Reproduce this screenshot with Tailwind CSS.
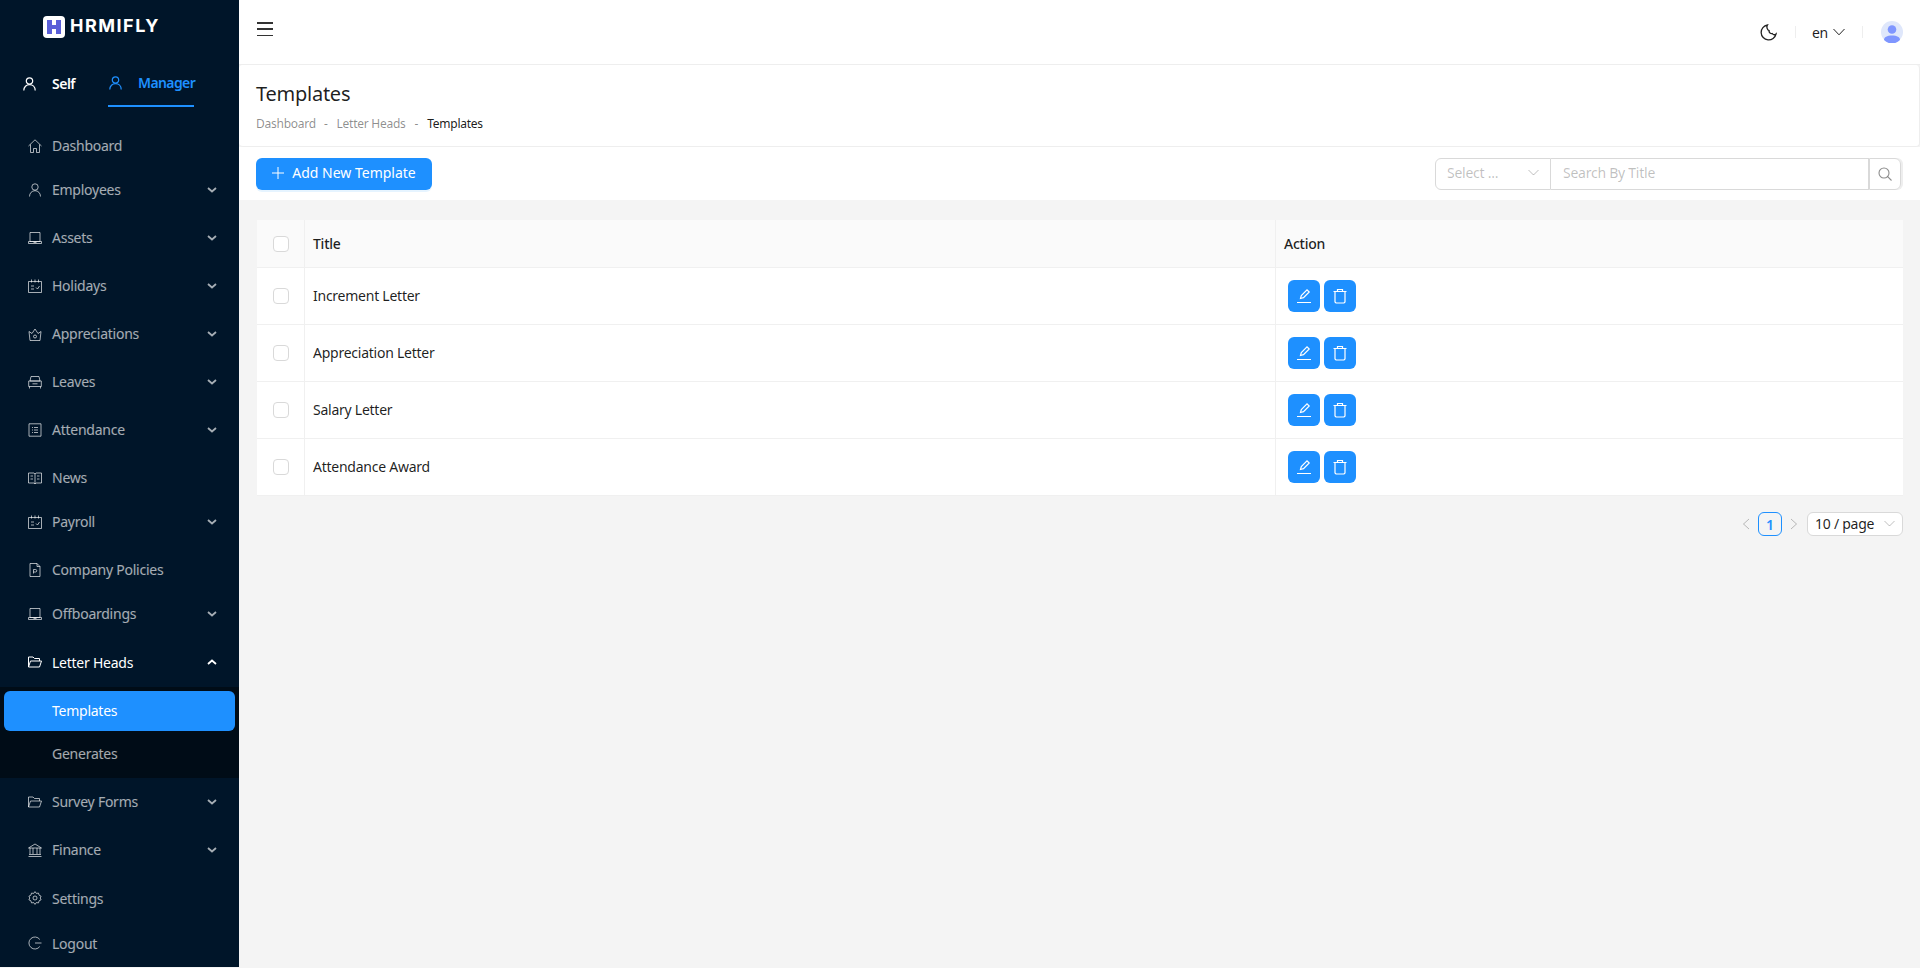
<!DOCTYPE html>
<html>
<head>
<meta charset="utf-8">
<script src="https://cdn.jsdelivr.net/npm/@tailwindcss/browser@4"></script>
<title>Templates</title>
</head>
<body class="font-['Noto_Sans',sans-serif] text-[14px] tracking-[-0.25px] text-[#000000e0] bg-[#f4f4f4] overflow-hidden">
<div class="flex h-[968px] w-[1920px]">
  <aside class="w-[239px] h-[967px] shrink-0 bg-[#001529] text-white/65">
    <div class="h-[52px] pt-[16px] pl-[43px] flex items-start gap-[5px]">
      <svg class="shrink-0" width="22" height="22" viewBox="0 0 22 22"><rect width="22" height="22" rx="4" fill="#fff"/><path d="M4 4h5v5h4V4h5v14h-5v-5H9v5H4z" fill="#5a5fd8"/></svg>
      <span class="text-[18px] leading-[20px] font-bold tracking-[1.5px] text-white font-['Inter',sans-serif]">HRMIFLY</span>
    </div>
    <div class="h-[55px] flex pl-[23px] text-[14px] font-semibold">
      <div class="flex items-center h-[55px] pt-[8px] w-[85px] text-white">
        <svg class="shrink-0" width="13" height="14" viewBox="0 0 13 14" fill="none" stroke="currentColor" stroke-width="1.2"><circle cx="6.5" cy="4" r="3.2"/><path d="M.8 13.4c0-3.4 2.5-5.8 5.7-5.8s5.7 2.4 5.7 5.8"/></svg>
        <span class="ml-[16px] tracking-[-0.5px]">Self</span>
      </div>
      <div class="flex items-center h-[55px] pt-[8px] w-[86px] border-b-2 border-[#1e90ff] text-[#1e90ff]">
        <svg class="ml-[1px] shrink-0" width="13" height="14" viewBox="0 0 13 14" fill="none" stroke="currentColor" stroke-width="1.2"><circle cx="6.5" cy="4" r="3.2"/><path d="M.8 13.4c0-3.4 2.5-5.8 5.7-5.8s5.7 2.4 5.7 5.8"/></svg>
        <span class="ml-[16px] tracking-[-0.6px]">Manager</span>
      </div>
    </div>
    <nav class="pt-[19px]">
      <a class="flex items-center h-[40px] pb-[1px] mb-1 pl-[28px]"><svg class="mr-[10px]" width="14" height="14" viewBox="0 0 14 14" fill="none" stroke="currentColor"><path d="M.5 7 7 .8 13.500 7M2.500 5.500v8h3V9.500h3v4h3v-8"/></svg>Dashboard</a>
      <a class="flex items-center h-[40px] pb-[1px] mb-2 pl-[28px] pr-[22px]"><svg class="mr-[10px]" width="14" height="14" viewBox="0 0 14 14" fill="none" stroke="currentColor"><circle cx="7" cy="4" r="3.2"/><path d="M1.500 13.500c0-3.400 2.400-5.800 5.500-5.800s5.500 2.400 5.500 5.800"/></svg><span class="flex-1">Employees</span><svg width="10" height="6" viewBox="0 0 10 6" fill="none" stroke="currentColor" stroke-width="1.8"><path d="m1 1 4 3.500L9 1"/></svg></a>
      <a class="flex items-center h-[40px] pb-[1px] mb-2 pl-[28px] pr-[22px]"><svg class="mr-[10px]" width="14" height="14" viewBox="0 0 14 14" fill="none" stroke="currentColor"><path d="M2 1.500h10v9H2zM.5 10.500h13v2H.5zM5.500 11.500h3"/></svg><span class="flex-1">Assets</span><svg width="10" height="6" viewBox="0 0 10 6" fill="none" stroke="currentColor" stroke-width="1.8"><path d="m1 1 4 3.500L9 1"/></svg></a>
      <a class="flex items-center h-[40px] pb-[1px] mb-2 pl-[28px] pr-[22px]"><svg class="mr-[10px]" width="14" height="14" viewBox="0 0 14 14" fill="none" stroke="currentColor"><path d="M.5 2.500h13v11H.5zM3.500.5v3M7 .5v3M10.500.5v3M3 7h3M3 10h3M8 8.500l1.500 1.500 2-3"/></svg><span class="flex-1">Holidays</span><svg width="10" height="6" viewBox="0 0 10 6" fill="none" stroke="currentColor" stroke-width="1.8"><path d="m1 1 4 3.500L9 1"/></svg></a>
      <a class="flex items-center h-[40px] pb-[1px] mb-2 pl-[28px] pr-[22px]"><svg class="mr-[10px]" width="14" height="14" viewBox="0 0 14 14" fill="none" stroke="currentColor"><path d="M1 4.500 4 6.500 7 2l3 4.500 3-2-1 9H2zM1 1.500l.01 0M13 1.500l.01 0"/><circle cx="7" cy="9.500" r="1.500"/></svg><span class="flex-1">Appreciations</span><svg width="10" height="6" viewBox="0 0 10 6" fill="none" stroke="currentColor" stroke-width="1.8"><path d="m1 1 4 3.500L9 1"/></svg></a>
      <a class="flex items-center h-[40px] pb-[1px] mb-2 pl-[28px] pr-[22px]"><svg class="mr-[10px]" width="14" height="14" viewBox="0 0 14 14" fill="none" stroke="currentColor"><path d="M3 1.500h8l1 4.500H2zM.7 6h12.600v5.500H.7zM1.500 11.500v2M12.500 11.500v2M4.500 8.800h5"/></svg><span class="flex-1">Leaves</span><svg width="10" height="6" viewBox="0 0 10 6" fill="none" stroke="currentColor" stroke-width="1.8"><path d="m1 1 4 3.500L9 1"/></svg></a>
      <a class="flex items-center h-[40px] pb-[1px] mb-2 pl-[28px] pr-[22px]"><svg class="mr-[10px]" width="14" height="14" viewBox="0 0 14 14" fill="none" stroke="currentColor"><path d="M1 .8h12v12.400H1zM6 4.500h4M6 7h4M6 9.500h4M4 4.500h1M4 7h1M4 9.500h1"/></svg><span class="flex-1">Attendance</span><svg width="10" height="6" viewBox="0 0 10 6" fill="none" stroke="currentColor" stroke-width="1.8"><path d="m1 1 4 3.500L9 1"/></svg></a>
      <a class="flex items-center h-[40px] pb-[1px] mb-1 pl-[28px]"><svg class="mr-[10px]" width="14" height="14" viewBox="0 0 14 14" fill="none" stroke="currentColor"><path d="M.5 2h5.500L7 3l1-1h5.500v10H8l-1 1-1-1H.5zM7 3v10M2.500 5H5M2.500 8H5M9 5h2.500M9 8h2.500"/></svg>News</a>
      <a class="flex items-center h-[40px] pb-[1px] mb-2 pl-[28px] pr-[22px]"><svg class="mr-[10px]" width="14" height="14" viewBox="0 0 14 14" fill="none" stroke="currentColor"><path d="M.5 2.500h13v11H.5zM3.500.5v3M7 .5v3M10.500.5v3M3 7h3M3 10h3M8 8.500l1.500 1.500 2-3"/></svg><span class="flex-1">Payroll</span><svg width="10" height="6" viewBox="0 0 10 6" fill="none" stroke="currentColor" stroke-width="1.8"><path d="m1 1 4 3.500L9 1"/></svg></a>
      <a class="flex items-center h-[40px] pb-[1px] mb-1 pl-[28px]"><svg class="mr-[10px]" width="14" height="14" viewBox="0 0 14 14" fill="none" stroke="currentColor"><path d="M2 .5h7l3 3v10H2zM9 .5v3h3M5.500 10.500v-4h2a1.200 1.200 0 0 1 0 2.500h-2"/></svg>Company Policies</a>
      <a class="flex items-center h-[40px] pb-[1px] mb-2 pl-[28px] pr-[22px]"><svg class="mr-[10px]" width="14" height="14" viewBox="0 0 14 14" fill="none" stroke="currentColor"><path d="M2 1.500h10v9H2zM.5 10.500h13v2H.5zM5.500 11.500h3"/></svg><span class="flex-1">Offboardings</span><svg width="10" height="6" viewBox="0 0 10 6" fill="none" stroke="currentColor" stroke-width="1.8"><path d="m1 1 4 3.500L9 1"/></svg></a>
      <a class="flex items-center h-[40px] mb-[5px] pl-[28px] pr-[22px] text-white"><svg class="mr-[10px]" width="14" height="14" viewBox="0 0 14 14" fill="none" stroke="currentColor"><path d="M.5 12V2h4.500l1.500 1.500h5V6M.5 12 2.500 6h11l-2 6z"/></svg><span class="flex-1">Letter Heads</span><svg width="10" height="6" viewBox="0 0 10 6" fill="none" stroke="currentColor" stroke-width="1.8"><path d="m1 5 4-3.500L9 5"/></svg></a>
      <div class="bg-[#000c17] py-1 mb-[4px]">
        <a class="flex items-center h-[40px] pb-[1px] mx-[4px] pl-[48px] rounded-md bg-[#1e90ff] text-white w-[231px]">Templates</a>
        <a class="flex items-center h-[40px] pb-[1px] mt-[3px] pl-[52px]">Generates</a>
      </div>
      <a class="flex items-center h-[40px] pb-[1px] mb-2 pl-[28px] pr-[22px]"><svg class="mr-[10px]" width="14" height="14" viewBox="0 0 14 14" fill="none" stroke="currentColor"><path d="M.5 12V2h4.500l1.500 1.500h5V6M.5 12 2.500 6h11l-2 6z"/></svg><span class="flex-1">Survey Forms</span><svg width="10" height="6" viewBox="0 0 10 6" fill="none" stroke="currentColor" stroke-width="1.8"><path d="m1 1 4 3.500L9 1"/></svg></a>
      <a class="flex items-center h-[40px] pb-[1px] mb-2 pl-[28px] pr-[22px]"><svg class="mr-[10px]" width="14" height="14" viewBox="0 0 14 14" fill="none" stroke="currentColor"><path d="M.5 5 7 1l6.500 4zM2 5v6M5 5v6M9 5v6M12 5v6M1 11.500h12M.5 13.500h13"/></svg><span class="flex-1">Finance</span><svg width="10" height="6" viewBox="0 0 10 6" fill="none" stroke="currentColor" stroke-width="1.8"><path d="m1 1 4 3.500L9 1"/></svg></a>
      <a class="flex items-center h-[40px] mb-[5px] pl-[28px]"><svg class="mr-[10px]" width="14" height="14" viewBox="0 0 14 14" fill="none" stroke="currentColor"><path d="m7 .6 1.300 1.800 2.200-.3.600 2.100 2 1-.9 1.800.9 1.800-2 1-.6 2.100-2.200-.3L7 13.400l-1.300-1.800-2.200.3-.6-2.100-2-1 .9-1.800-.9-1.800 2-1 .6-2.100 2.200.3z"/><circle cx="7" cy="7" r="2"/></svg>Settings</a>
      <a class="flex items-center h-[40px] pl-[28px]"><svg class="mr-[10px]" width="14" height="14" viewBox="0 0 14 14" fill="none" stroke="currentColor"><path d="M11.800 3.500A6 6 0 1 0 11.800 10.500M7 7h6.500"/></svg>Logout</a>
    </nav>
  </aside>

  <div class="flex-1 min-w-0 flex flex-col">
    <header class="h-[65px] shrink-0 bg-white border-b border-[#eeeeee] flex items-center pl-[18px] pr-[17px]">
      <div class="mb-[6px] w-[16px] h-[14px] flex flex-col justify-between"><span class="h-[1.5px] bg-[#333]"></span><span class="h-[1.5px] bg-[#333]"></span><span class="h-[1.5px] bg-[#333]"></span></div>
      <div class="flex-1"></div>
      <svg width="17" height="17" viewBox="0 0 17 17" fill="none" stroke="#222" stroke-width="1.3"><path d="M7.500 1A7.500 7.500 0 1 0 16 10c-1 .8-2.800.7-3.700-.4-1.600.4-3.500-1-3.200-2.900C7.300 6 6.200 3 7.500 1z"/></svg>
      <span class="w-px h-[12px] bg-[#eeeeee] ml-[18px]"></span>
      <span class="ml-[16px] text-[14px]">en</span>
      <svg class="ml-[5px]" width="12" height="8" viewBox="0 0 12 8" fill="none" stroke="#222" stroke-width="1"><path d="m.5 1 5.500 5.800L11.500 1"/></svg>
      <span class="w-px h-[12px] bg-[#eeeeee] ml-[17px]"></span>
      <svg class="ml-[18px]" width="22" height="22" viewBox="0 0 22 22"><circle cx="11" cy="11" r="11" fill="#dfe7fb"/><circle cx="11" cy="8.500" r="4.300" fill="#7f96ff"/><path d="M3 19c0-3 3-4.500 8-4.500s8 1.500 8 4.500a11 11 0 0 1-16 0z" fill="#7f96ff"/></svg>
    </header>

    <div class="h-[82px] shrink-0 bg-white border-b border-r border-[#eeeeee] rounded-[4px] pl-[17px] pt-[15px]">
      <h1 class="text-[20px] leading-[28px] font-normal">Templates</h1>
      <div class="mt-[8px] text-[12px] leading-[16px] flex text-black/45">
        <span>Dashboard</span><span class="ml-[8px] mr-[9px]">-</span><span>Letter Heads</span><span class="mx-[9px]">-</span><span class="text-black/90">Templates</span>
      </div>
    </div>

    <div class="h-[53px] shrink-0 bg-white flex items-center pl-[17px] pr-[19px]">
      <button class="h-[32px] w-[176px] pb-[2px] rounded-md bg-[#1e90ff] text-white tracking-normal flex items-center justify-center gap-[8px] shadow-[0_2px_0_rgba(5,145,255,0.1)]">
        <svg width="12" height="12" viewBox="0 0 12 12" fill="none" stroke="currentColor"><path d="M6 0v12M0 6h12"/></svg>Add New Template
      </button>
      <div class="flex-1"></div>
      <div class="h-[32px] w-[116px] pb-[2px] rounded-l-md border border-[#d9d9d9] flex items-center pl-[11px] pr-[11px] text-black/25"><span class="flex-1">Select ...</span><svg width="11" height="7" viewBox="0 0 11 7" fill="none" stroke="currentColor"><path d="m.5 1 5 5 5-5"/></svg></div>
      <div class="h-[32px] w-[318px] pb-[2px] border border-l-0 border-[#d9d9d9] flex items-center pl-[12px] text-black/25">Search By Title</div>
      <div class="h-[32px] w-[32px] rounded-r-md border border-[#d9d9d9] flex items-center justify-center text-black/45 shadow-[2px_0_0_#eeeeee]"><svg width="14" height="14" viewBox="0 0 14 14" fill="none" stroke="currentColor" stroke-width="1.100"><circle cx="6" cy="6" r="5"/><path d="m9.700 9.700 3.800 3.800"/></svg></div>
    </div>

    <main class="flex-1 pt-[20px] pl-[18px] pr-[17px]">
      <div class="rounded-t-md bg-white">
        <div class="flex h-[48px] bg-[#fafafa] border-b border-[#f0f0f0] font-medium">
          <div class="w-[48px] border-r border-[#f0f0f0] flex items-center justify-center"><span class="block w-[16px] h-[16px] rounded-[4px] border border-[#d9d9d9] bg-white"></span></div>
          <div class="w-[971px] border-r border-[#f0f0f0] flex items-center pl-[8px]">Title</div>
          <div class="flex-1 flex items-center pl-[8px]">Action</div>
        </div>
        <div class="flex h-[57px] border-b border-[#f0f0f0]">
          <div class="w-[48px] border-r border-[#f0f0f0] flex items-center justify-center"><span class="block w-[16px] h-[16px] rounded-[4px] border border-[#d9d9d9]"></span></div>
          <div class="w-[971px] pb-[2px] border-r border-[#f0f0f0] flex items-center pl-[8px]">Increment Letter</div>
          <div class="flex-1 flex items-center pl-[12px] gap-[4px]">
            <button class="w-[32px] h-[32px] rounded-md bg-[#1e90ff] flex items-center justify-center"><svg width="16" height="16" viewBox="0 0 16 16" fill="none" stroke="#fff" stroke-width="1.200"><path d="m4.500 10.500.8-3L11 1.800l2.200 2.200L7.500 9.700zM1 14.500h14"/></svg></button>
            <button class="w-[32px] h-[32px] rounded-md bg-[#1e90ff] flex items-center justify-center"><svg width="16" height="16" viewBox="0 0 16 16" fill="none" stroke="#fff" stroke-width="1.200"><path d="M1.500 3.500h13M5.500 3.500V1.500h5v2M3 3.500v10.500l1 1h8l1-1V3.500"/></svg></button>
          </div>
        </div>
        <div class="flex h-[57px] border-b border-[#f0f0f0]">
          <div class="w-[48px] border-r border-[#f0f0f0] flex items-center justify-center"><span class="block w-[16px] h-[16px] rounded-[4px] border border-[#d9d9d9]"></span></div>
          <div class="w-[971px] pb-[2px] border-r border-[#f0f0f0] flex items-center pl-[8px]">Appreciation Letter</div>
          <div class="flex-1 flex items-center pl-[12px] gap-[4px]">
            <button class="w-[32px] h-[32px] rounded-md bg-[#1e90ff] flex items-center justify-center"><svg width="16" height="16" viewBox="0 0 16 16" fill="none" stroke="#fff" stroke-width="1.200"><path d="m4.500 10.500.8-3L11 1.800l2.200 2.200L7.500 9.700zM1 14.500h14"/></svg></button>
            <button class="w-[32px] h-[32px] rounded-md bg-[#1e90ff] flex items-center justify-center"><svg width="16" height="16" viewBox="0 0 16 16" fill="none" stroke="#fff" stroke-width="1.200"><path d="M1.500 3.500h13M5.500 3.500V1.500h5v2M3 3.500v10.500l1 1h8l1-1V3.500"/></svg></button>
          </div>
        </div>
        <div class="flex h-[57px] border-b border-[#f0f0f0]">
          <div class="w-[48px] border-r border-[#f0f0f0] flex items-center justify-center"><span class="block w-[16px] h-[16px] rounded-[4px] border border-[#d9d9d9]"></span></div>
          <div class="w-[971px] pb-[2px] border-r border-[#f0f0f0] flex items-center pl-[8px]">Salary Letter</div>
          <div class="flex-1 flex items-center pl-[12px] gap-[4px]">
            <button class="w-[32px] h-[32px] rounded-md bg-[#1e90ff] flex items-center justify-center"><svg width="16" height="16" viewBox="0 0 16 16" fill="none" stroke="#fff" stroke-width="1.200"><path d="m4.500 10.500.8-3L11 1.800l2.200 2.200L7.500 9.700zM1 14.500h14"/></svg></button>
            <button class="w-[32px] h-[32px] rounded-md bg-[#1e90ff] flex items-center justify-center"><svg width="16" height="16" viewBox="0 0 16 16" fill="none" stroke="#fff" stroke-width="1.200"><path d="M1.500 3.500h13M5.500 3.500V1.500h5v2M3 3.500v10.500l1 1h8l1-1V3.500"/></svg></button>
          </div>
        </div>
        <div class="flex h-[57px] border-b border-[#f0f0f0]">
          <div class="w-[48px] border-r border-[#f0f0f0] flex items-center justify-center"><span class="block w-[16px] h-[16px] rounded-[4px] border border-[#d9d9d9]"></span></div>
          <div class="w-[971px] pb-[2px] border-r border-[#f0f0f0] flex items-center pl-[8px]">Attendance Award</div>
          <div class="flex-1 flex items-center pl-[12px] gap-[4px]">
            <button class="w-[32px] h-[32px] rounded-md bg-[#1e90ff] flex items-center justify-center"><svg width="16" height="16" viewBox="0 0 16 16" fill="none" stroke="#fff" stroke-width="1.200"><path d="m4.500 10.500.8-3L11 1.800l2.200 2.200L7.500 9.700zM1 14.500h14"/></svg></button>
            <button class="w-[32px] h-[32px] rounded-md bg-[#1e90ff] flex items-center justify-center"><svg width="16" height="16" viewBox="0 0 16 16" fill="none" stroke="#fff" stroke-width="1.200"><path d="M1.500 3.500h13M5.500 3.500V1.500h5v2M3 3.500v10.500l1 1h8l1-1V3.500"/></svg></button>
          </div>
        </div>
      </div>
      <div class="mt-[16px] flex items-center justify-end">
        <svg width="8" height="12" viewBox="0 0 8 12" fill="none" stroke="#00000040"><path d="M7 1 1.500 6 7 11"/></svg>
        <span class="ml-[8px] w-[24px] h-[24px] rounded-md border border-[#1e90ff] text-[#1e90ff] font-semibold flex items-center justify-center">1</span>
        <svg class="ml-[8px]" width="8" height="12" viewBox="0 0 8 12" fill="none" stroke="#00000040"><path d="M1 1l5.500 5L1 11"/></svg>
        <div class="ml-[9px] w-[96px] h-[24px] pb-[1px] rounded-md border border-[#d9d9d9] bg-white flex items-center pl-[7px] pr-[7px]"><span class="flex-1">10 / page</span><svg width="11" height="7" viewBox="0 0 11 7" fill="none" stroke="#00000040"><path d="m.5 1 5 5 5-5"/></svg></div>
      </div>
    </main>
  </div>
</div>
</body>
</html>
